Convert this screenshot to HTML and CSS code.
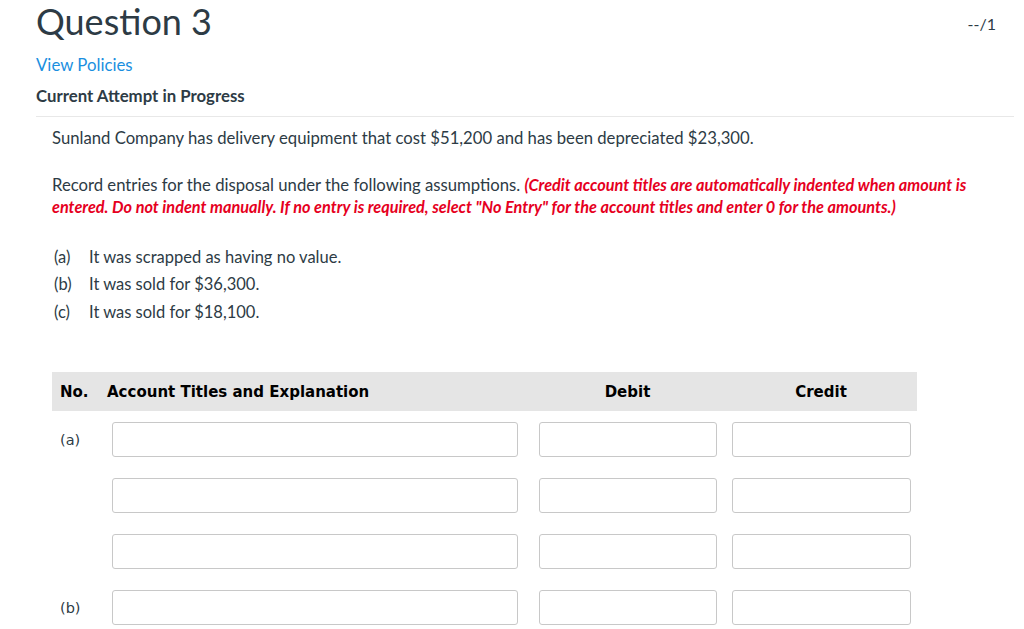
FILE: index.html
```html
<!DOCTYPE html>
<html lang="en">
<head>
<meta charset="utf-8">
<title>Question 3</title>
<link rel="stylesheet" href="styles.css">
</head>
<body>
<div class="page">
  <header class="q-header">
    <h1 class="q-title">Question 3</h1>
    <span class="q-score">--/1</span>
  </header>
  <a class="policies" href="#">View Policies</a>
  <div class="attempt">Current Attempt in Progress</div>
  <div class="q-body">
    <p class="para">Sunland Company has delivery equipment that cost $51,200 and has been depreciated $23,300.</p>
    <p class="para instr">Record entries for the disposal under the following assumptions. <em class="warn">(Credit account titles are automatically indented when amount is entered. Do not indent manually. If no entry is required, select "No Entry" for the account titles and enter 0 for the amounts.)</em></p>
    <ul class="cases">
      <li><span class="lbl">(a)</span><span>It was scrapped as having no value.</span></li>
      <li><span class="lbl">(b)</span><span>It was sold for $36,300.</span></li>
      <li><span class="lbl">(c)</span><span>It was sold for $18,100.</span></li>
    </ul>
    <div class="journal">
      <div class="j-head">
        <div class="h-no">No.</div>
        <div class="h-acct">Account Titles and Explanation</div>
        <div class="h-debit">Debit</div>
        <div class="h-credit">Credit</div>
      </div>
      <div class="j-row">
        <div class="c-no">(a)</div>
        <input class="in in-acct" type="text">
        <input class="in in-debit" type="text">
        <input class="in in-credit" type="text">
      </div>
      <div class="j-row">
        <div class="c-no"></div>
        <input class="in in-acct" type="text">
        <input class="in in-debit" type="text">
        <input class="in in-credit" type="text">
      </div>
      <div class="j-row">
        <div class="c-no"></div>
        <input class="in in-acct" type="text">
        <input class="in in-debit" type="text">
        <input class="in in-credit" type="text">
      </div>
      <div class="j-row">
        <div class="c-no">(b)</div>
        <input class="in in-acct" type="text">
        <input class="in in-debit" type="text">
        <input class="in in-credit" type="text">
      </div>
    </div>
  </div>
</div>
</body>
</html>
```

FILE: styles.css
```css
html, body {
  margin: 0;
  padding: 0;
  background: #ffffff;
}
body {
  font-family: Lato, "Open Sans", sans-serif;
  color: #2d3b45;
  overflow: hidden;
}
.page {
  padding: 0 10px 0 36px;
}
.q-header {
  display: flex;
  justify-content: space-between;
  align-items: flex-start;
}
.q-title {
  margin: 0;
  font-size: 36px;
  font-weight: 400;
  line-height: 43px;
}
.q-score {
  font-size: 16px;
  margin-top: 14px;
  margin-right: 18px;
}
.policies {
  display: block;
  margin-top: 11px;
  font-size: 16.8px;
  line-height: 22px;
  color: #1a8fe0;
  text-decoration: none;
}
.attempt {
  margin-top: 9px;
  font-size: 16.8px;
  font-weight: 700;
  line-height: 22px;
  padding-bottom: 9px;
  border-bottom: 1px solid #e8e8e8;
}
.q-body {
  padding-left: 16px;
}
.para {
  margin: 0;
  font-size: 16.7px;
  line-height: 22.5px;
}
.para:first-child {
  margin-top: 10px;
}
.instr {
  margin-top: 24px;
  padding-right: 30px;
}
.warn {
  color: #e6001e;
  font-weight: 700;
  font-style: italic;
  font-size: 16.3px;
}
.cases {
  list-style: none;
  margin: 25px 0 0;
  padding: 0 0 0 2px;
  font-size: 16.5px;
}
.cases li {
  display: flex;
  line-height: 27.5px;
}
.lbl {
  width: 35px;
}
.journal {
  margin-top: 46px;
  width: 865px;
  font-family: "DejaVu Sans", Verdana, sans-serif;
}
.j-head {
  display: flex;
  align-items: center;
  height: 39px;
  background: #e5e5e5;
  color: #000;
  font-weight: 700;
  font-size: 15px;
}
.h-no {
  width: 47px;
  padding-left: 8px;
}
.h-acct {
  width: 410px;
}
.h-debit {
  width: 199px;
  padding-left: 22px;
  box-sizing: border-box;
  text-align: center;
}
.h-credit {
  width: 194px;
  padding-left: 16px;
  box-sizing: border-box;
  text-align: center;
}
.j-row {
  display: flex;
  align-items: center;
  margin-top: 11px;
}
.j-row + .j-row {
  margin-top: 21px;
}
.c-no {
  width: 52px;
  padding-left: 8px;
  font-size: 14.5px;
  color: #2d3b45;
}
.in {
  box-sizing: border-box;
  height: 35px;
  margin: 0;
  border: 1px solid #c8c8c8;
  border-radius: 3px;
  background: #fff;
  font: inherit;
}
.in-acct {
  width: 406px;
}
.in-debit {
  width: 178px;
  margin-left: 21px;
}
.in-credit {
  width: 179px;
  margin-left: 15px;
}
```
